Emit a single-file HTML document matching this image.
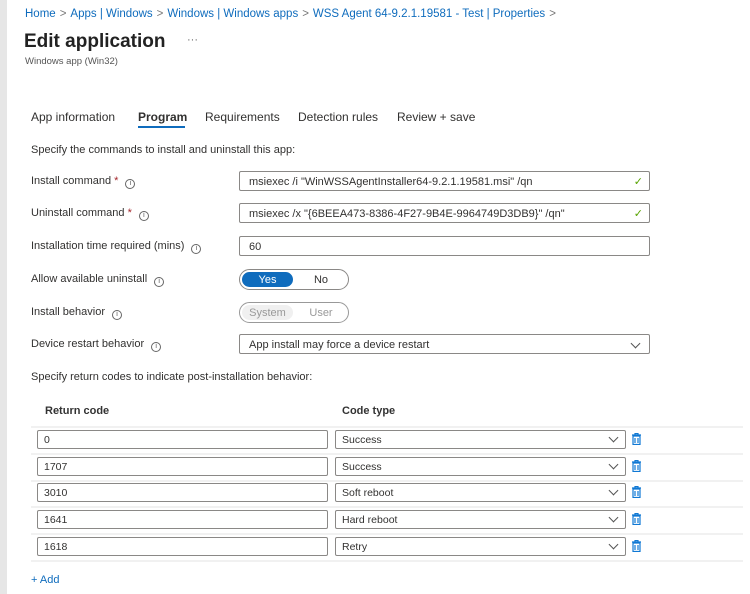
<!DOCTYPE html><html><head><style>
body{margin:0;width:750px;height:594px;background:#fff;font-family:"Liberation Sans",sans-serif;color:#323130;position:relative;overflow:hidden}
.a{position:absolute;white-space:nowrap}
.strip{position:absolute;left:0;top:0;width:7px;height:594px;background:#e6e6e6}
.bc{left:25px;top:8px;font-size:11.5px;color:#0f6cbd}
.bc span{color:#777;margin:0 4px}
.lbl{left:31px;font-size:11px;color:#323130}
.lbl i{font-style:normal;display:inline-block;width:8px;height:8px;border:1px solid #666;border-radius:50%;font-size:7px;line-height:8px;text-align:center;margin-left:7px;vertical-align:-1px;color:#555}
.req{color:#a4262c}
.inp{position:absolute;left:239px;width:400px;height:18px;border:1px solid #8a8886;border-radius:2px;font-size:11px;line-height:20px;padding-left:9px;box-sizing:content-box}
.ck{position:absolute;right:6px;top:0;color:#57a300;font-size:11px}
.tog{position:absolute;left:239px;width:108px;height:19px;border:1px solid #8a8886;border-radius:11px;font-size:11px}
.tog .on{position:absolute;left:2px;top:2px;width:51px;height:15px;border-radius:8px;background:#0f6cbd;color:#fff;text-align:center;line-height:17px}
.tog .off{position:absolute;left:56px;top:2px;width:50px;text-align:center;line-height:17px}
.chev{position:absolute;right:8px;top:4px;width:6px;height:6px;border-right:1px solid #555;border-bottom:1px solid #555;transform:rotate(45deg)}
.sep{position:absolute;left:31px;width:712px;height:2px;background:#f1f1f1}
.ri{position:absolute;left:37px;width:283px;height:17px;border:1px solid #8a8886;border-radius:2px;font-size:10.5px;line-height:19px;padding-left:6px}
.rs{position:absolute;left:335px;width:283px;height:17px;border:1px solid #8a8886;border-radius:2px;font-size:10.5px;line-height:19px;padding-left:6px}
.rs .chev{top:3px}
.tr{position:absolute;left:632px;width:9px;height:12px}
</style></head><body>
<div class="strip"></div>
<div class="a bc">Home<span>&gt;</span>Apps | Windows<span>&gt;</span>Windows | Windows apps<span>&gt;</span>WSS Agent 64-9.2.1.19581 - Test | Properties<span>&gt;</span></div>
<div class="a" style="left:24px;top:31px;font-size:19px;font-weight:bold;color:#222">Edit application</div>
<div class="a" style="left:187px;top:34px;font-size:11px;color:#666">···</div>
<div class="a" style="left:25px;top:56px;font-size:9.5px;color:#555">Windows app (Win32)</div>
<div class="a" style="left:31px;top:110px;font-size:12px">App information</div>
<div class="a" style="left:138px;top:110px;font-size:12px;font-weight:bold">Program</div>
<div class="a" style="left:138px;top:126px;width:47px;height:2px;background:#0f6cbd"></div>
<div class="a" style="left:205px;top:110px;font-size:12px">Requirements</div>
<div class="a" style="left:298px;top:110px;font-size:12px">Detection rules</div>
<div class="a" style="left:397px;top:110px;font-size:12px">Review + save</div>
<div class="a" style="left:31px;top:144px;font-size:11px">Specify the commands to install and uninstall this app:</div>
<div class="a lbl" style="top:175px">Install command <span class="req">*</span><i>i</i></div>
<div class="inp" style="top:171px">msiexec /i "WinWSSAgentInstaller64-9.2.1.19581.msi" /qn<span class="ck">✓</span></div>
<div class="a lbl" style="top:207px">Uninstall command <span class="req">*</span><i>i</i></div>
<div class="inp" style="top:203px">msiexec /x "{6BEEA473-8386-4F27-9B4E-9964749D3DB9}" /qn"<span class="ck">✓</span></div>
<div class="a lbl" style="top:240px">Installation time required (mins)<i>i</i></div>
<div class="inp" style="top:236px">60</div>
<div class="a lbl" style="top:273px">Allow available uninstall<i>i</i></div>
<div class="tog" style="top:269px"><div class="on">Yes</div><div class="off">No</div></div>
<div class="a lbl" style="top:306px">Install behavior<i>i</i></div>
<div class="tog" style="top:302px;border-color:#999;color:#999"><div class="on" style="background:#f0f0f0;color:#999">System</div><div class="off">User</div></div>
<div class="a lbl" style="top:338px">Device restart behavior<i>i</i></div>
<div class="inp" style="top:334px">App install may force a device restart<span class="chev" style="top:5px;right:10px"></span></div>
<div class="a" style="left:31px;top:371px;font-size:11px">Specify return codes to indicate post-installation behavior:</div>
<div class="a" style="left:45px;top:405px;font-size:11px;font-weight:bold;color:#333">Return code</div>
<div class="a" style="left:342px;top:405px;font-size:11px;font-weight:bold;color:#333">Code type</div>
<div class="sep" style="top:426px"></div><div class="sep" style="top:453px"></div><div class="sep" style="top:480px"></div><div class="sep" style="top:506px"></div><div class="sep" style="top:533px"></div><div class="sep" style="top:560px"></div>
<div class="ri" style="top:430px">0</div><div class="rs" style="top:430px">Success<span class="chev"></span></div>
<div class="ri" style="top:457px">1707</div><div class="rs" style="top:457px">Success<span class="chev"></span></div>
<div class="ri" style="top:483px">3010</div><div class="rs" style="top:483px">Soft reboot<span class="chev"></span></div>
<div class="ri" style="top:510px">1641</div><div class="rs" style="top:510px">Hard reboot<span class="chev"></span></div>
<div class="ri" style="top:537px">1618</div><div class="rs" style="top:537px">Retry<span class="chev"></span></div>
<svg class="tr" style="top:433px" viewBox="0 0 9 12"><path d="M0 2h9M3 2V0.5h3V2M1 3h7v8.5H1z M3 5v5M6 5v5" fill="none" stroke="#0f78d4" stroke-width="1.2"/></svg>
<svg class="tr" style="top:460px" viewBox="0 0 9 12"><path d="M0 2h9M3 2V0.5h3V2M1 3h7v8.5H1z M3 5v5M6 5v5" fill="none" stroke="#0f78d4" stroke-width="1.2"/></svg>
<svg class="tr" style="top:486px" viewBox="0 0 9 12"><path d="M0 2h9M3 2V0.5h3V2M1 3h7v8.5H1z M3 5v5M6 5v5" fill="none" stroke="#0f78d4" stroke-width="1.2"/></svg>
<svg class="tr" style="top:513px" viewBox="0 0 9 12"><path d="M0 2h9M3 2V0.5h3V2M1 3h7v8.5H1z M3 5v5M6 5v5" fill="none" stroke="#0f78d4" stroke-width="1.2"/></svg>
<svg class="tr" style="top:540px" viewBox="0 0 9 12"><path d="M0 2h9M3 2V0.5h3V2M1 3h7v8.5H1z M3 5v5M6 5v5" fill="none" stroke="#0f78d4" stroke-width="1.2"/></svg>
<div class="a" style="left:31px;top:574px;font-size:11px;color:#0f6cbd">+ Add</div>
</body></html>
